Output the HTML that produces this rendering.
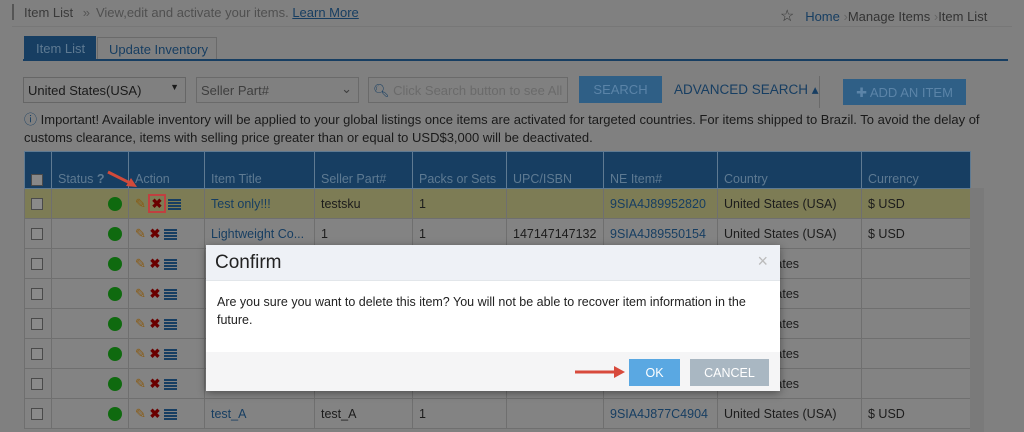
<!DOCTYPE html>
<html><head><meta charset="utf-8"><style>
*{box-sizing:border-box;margin:0;padding:0}
body{width:1024px;height:432px;overflow:hidden;background:#808080;font-family:"Liberation Sans",sans-serif;position:relative;color:#1a1a1a}
.a{position:absolute;white-space:nowrap}
.t{font-size:13px}
table{position:absolute;left:24px;top:151px;border-collapse:collapse;font-size:12.5px}
td,th{border:1px solid #6f6f6f;height:30px;padding:0 6px;text-align:left;font-weight:normal;color:#1c1c1c}
th{background:#173e62;color:#5e7a92;height:37px;vertical-align:bottom;padding-bottom:2px;border-color:#5f7a92}
tr.h td{background:#7d7c55}
td{background:#838383}
.lk{color:#173e62}
.cb{display:inline-block;width:12px;height:12px;border:1px solid #4a4a4a;background:#8a8a8a;vertical-align:middle}
.dot{display:inline-block;width:14px;height:14px;border-radius:50%;background:#0f6a0f;float:right}
.ic{font-size:13px}
.ls{display:inline-block;width:13px;height:11px;vertical-align:middle;background:repeating-linear-gradient(#173e62 0 2px,transparent 2px 3px)}
</style></head><body>
<div class="a" style="left:12px;top:4px;width:2px;height:16px;background:#555"></div>
<div class="a t" style="left:24px;top:5px;color:#3a3a3a">Item List <span style="color:#555;margin:0 6px">»</span><span style="color:#505050">View,edit and activate your items.</span> <u style="color:#173e62">Learn More</u></div>
<div class="a" style="left:12px;top:26px;width:1000px;height:1px;background:#777"></div>
<div class="a t" style="left:780px;top:6px;color:#333"><span style="font-size:16px;color:#333">☆</span>&nbsp;&nbsp;&nbsp;<span style="color:#173e62">Home</span> <span style="color:#666">›</span>Manage Items <span style="color:#666">›</span>Item List</div>
<div class="a t" style="left:24px;top:36px;width:72px;height:24px;background:#173e62;color:#5e7a92;padding:5px 0 0 12px">Item List</div>
<div class="a t" style="left:97px;top:37px;width:120px;height:23px;border:1px solid #6a6a6a;border-bottom:none;color:#173e62;padding:4px 0 0 11px">Update Inventory</div>
<div class="a" style="left:23px;top:59px;width:985px;height:2px;background:#173e62"></div>
<div class="a t" style="left:23px;top:77px;width:163px;height:26px;border:1px solid #666;background:#808080;padding:5px 4px;color:#1a1a1a">United States(USA)<span style="position:absolute;right:6px;top:4px;font-size:9px">▼</span></div>
<div class="a t" style="left:196px;top:77px;width:163px;height:26px;border:1px solid #6a6a6a;padding:5px 4px;color:#3e3e3e">Seller Part#<span style="position:absolute;right:6px;top:3px">⌄</span></div>
<div class="a t" style="left:368px;top:77px;width:200px;height:26px;border:1px solid #6a6a6a;padding:5px 4px;color:#6a6a6a;overflow:hidden"><span style="color:#173e62">🔍︎</span> Click Search button to see All Item</div>
<div class="a t" style="left:579px;top:76px;width:83px;height:27px;background:#2f5f86;color:#5b84a8;text-align:center;padding-top:6px">SEARCH</div>
<div class="a" style="left:674px;top:82px;font-size:13.5px;color:#173e62">ADVANCED SEARCH ▴</div>
<div class="a" style="left:819px;top:76px;width:1px;height:32px;background:#6a6a6a"></div>
<div class="a t" style="left:843px;top:79px;width:123px;height:26px;background:#2f5f86;color:#5b84a8;text-align:center;padding-top:6px">✚ ADD AN ITEM</div>
<div class="a t" style="left:24px;top:111px;color:#1a1a1a;line-height:18px"><span style="color:#173e62">ⓘ</span> Important! Available inventory will be applied to your global listings once items are activated for targeted countries. For items shipped to Brazil. To avoid the delay of<br>customs clearance, items with selling price greater than or equal to USD$3,000 will be deactivated.</div>
<table>
<tr><th style="width:27px"><span class="cb" style="background:#888"></span></th><th style="width:77px">Status <b>?</b></th><th style="width:76px">Action</th><th style="width:110px">Item Title</th><th style="width:98px">Seller Part#</th><th style="width:94px">Packs or Sets</th><th style="width:97px">UPC/ISBN</th><th style="width:114px">NE Item#</th><th style="width:144px">Country</th><th style="width:109px">Currency</th></tr>
<tr class="h"><td><span class="cb"></span></td><td><span class="dot"></span></td><td class="ic"><span style="color:#8a5a10">✎</span> <span style="color:#6a0000;font-weight:bold;outline:2px solid #c04040;padding:0 2px">✖</span> <span class="ls"></span></td><td class="lk">Test only!!!</td><td>testsku</td><td>1</td><td></td><td class="lk">9SIA4J89952820</td><td>United States (USA)</td><td>$ USD</td></tr>
<tr><td><span class="cb"></span></td><td><span class="dot"></span></td><td class="ic"><span style="color:#8a5a10">✎</span> <span style="color:#6a0000;font-weight:bold">✖</span> <span class="ls"></span></td><td class="lk">Lightweight Co...</td><td>1</td><td>1</td><td>147147147132</td><td class="lk">9SIA4J89550154</td><td>United States (USA)</td><td>$ USD</td></tr>
<tr><td><span class="cb"></span></td><td><span class="dot"></span></td><td class="ic"><span style="color:#8a5a10">✎</span> <span style="color:#6a0000;font-weight:bold">✖</span> <span class="ls"></span></td><td></td><td></td><td></td><td></td><td></td><td>United States</td><td></td></tr>
<tr><td><span class="cb"></span></td><td><span class="dot"></span></td><td class="ic"><span style="color:#8a5a10">✎</span> <span style="color:#6a0000;font-weight:bold">✖</span> <span class="ls"></span></td><td></td><td></td><td></td><td></td><td></td><td>United States</td><td></td></tr>
<tr><td><span class="cb"></span></td><td><span class="dot"></span></td><td class="ic"><span style="color:#8a5a10">✎</span> <span style="color:#6a0000;font-weight:bold">✖</span> <span class="ls"></span></td><td></td><td></td><td></td><td></td><td></td><td>United States</td><td></td></tr>
<tr><td><span class="cb"></span></td><td><span class="dot"></span></td><td class="ic"><span style="color:#8a5a10">✎</span> <span style="color:#6a0000;font-weight:bold">✖</span> <span class="ls"></span></td><td></td><td></td><td></td><td></td><td></td><td>United States</td><td></td></tr>
<tr><td><span class="cb"></span></td><td><span class="dot"></span></td><td class="ic"><span style="color:#8a5a10">✎</span> <span style="color:#6a0000;font-weight:bold">✖</span> <span class="ls"></span></td><td></td><td></td><td></td><td></td><td></td><td>United States</td><td></td></tr>
<tr><td><span class="cb"></span></td><td><span class="dot"></span></td><td class="ic"><span style="color:#8a5a10">✎</span> <span style="color:#6a0000;font-weight:bold">✖</span> <span class="ls"></span></td><td class="lk">test_A</td><td>test_A</td><td>1</td><td></td><td class="lk">9SIA4J877C4904</td><td>United States (USA)</td><td>$ USD</td></tr>
</table>
<div class="a" style="left:970px;top:188px;width:14px;height:244px;background:#7a7a7a"></div>
<svg class="a" style="left:104px;top:168px" width="36" height="24"><path d="M4 4 L28 16" stroke="#d24a3a" stroke-width="3"/><path d="M33 19 L22 18 L27 10Z" fill="#d24a3a"/></svg>
<div class="a" style="left:206px;top:245px;width:574px;height:146px;background:#fff;box-shadow:0 2px 8px rgba(0,0,0,.4)">
<div style="height:36px;background:#eef1f6;border-bottom:1px solid #e2e6ea;font-size:19px;padding:7px 9px;color:#222">Confirm<span style="position:absolute;right:12px;top:6px;color:#bbb;font-size:18px">×</span></div>
<div style="font-size:12.5px;line-height:18px;padding:12px 30px 12px 11px;color:#222;height:71px;white-space:normal">Are you sure you want to delete this item? You will not be able to recover item information in the future.</div>
<div style="height:39px;background:#f5f5f6;position:relative">
<div class="a" style="left:423px;top:7px;width:51px;height:27px;background:#5aa8e2;color:#fff;font-size:12.5px;text-align:center;padding-top:7px">OK</div>
<div class="a" style="left:484px;top:7px;width:79px;height:27px;background:#a9b7c2;color:#fff;font-size:12.5px;text-align:center;padding-top:7px">CANCEL</div>
<svg class="a" style="left:366px;top:12px" width="56" height="16"><path d="M3 8 H44" stroke="#d84a3c" stroke-width="3"/><path d="M53 8 L42 2 L42 14Z" fill="#d84a3c"/></svg>
</div></div>
</body></html>
